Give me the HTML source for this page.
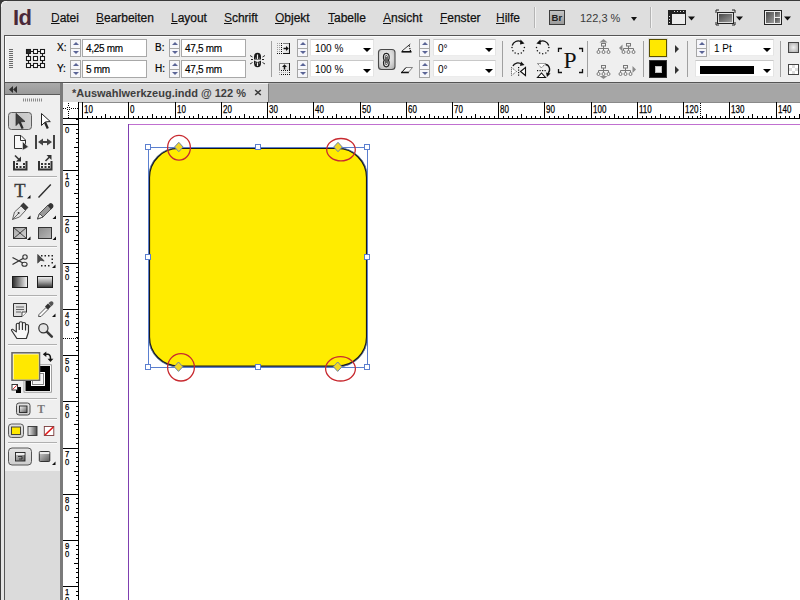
<!DOCTYPE html>
<html><head><meta charset="utf-8">
<style>
*{box-sizing:border-box;margin:0;padding:0}
html,body{width:800px;height:600px;overflow:hidden;background:#dedede;font-family:"Liberation Sans",sans-serif;position:relative}
.a{position:absolute}
.menu{position:absolute;top:11px;font-size:12px;letter-spacing:-0.02px;color:#111;-webkit-text-stroke:0.25px #111;white-space:nowrap}
.menu u{text-decoration:underline;text-underline-offset:0.5px;text-decoration-thickness:1px;-webkit-text-stroke:0}
.lbl{position:absolute;font-size:10px;color:#000;-webkit-text-stroke:0.2px #000}
.spin{position:absolute;width:11px;height:18px;border:1px solid #a6a6a6;background:linear-gradient(#f6f6fa 0 8px,#a6a6a6 8px 9px,#f6f6fa 9px)}
.spin:before{content:"";position:absolute;left:1.5px;top:2px;border-left:3px solid transparent;border-right:3px solid transparent;border-bottom:3.5px solid #5a6496}
.spin:after{content:"";position:absolute;left:1.5px;top:11px;border-left:3px solid transparent;border-right:3px solid transparent;border-top:3.5px solid #5a6496}
.inp{position:absolute;height:18px;background:#fff;border:1px solid #a8a8a8;font-size:10px;letter-spacing:-0.3px;color:#000;-webkit-text-stroke:0.15px #000;padding:3px 0 0 3px;white-space:nowrap}
.cmb{position:absolute;height:17px;background:#fff;border-top:1px solid #c8c8c8;border-left:1px solid #e4e4e4;border-right:1px solid #e4e4e4;border-bottom:1px solid #ececec;font-size:10px;color:#000;padding:3px 0 0 4px;white-space:nowrap}
.cmb:after{content:"";position:absolute;right:2px;top:8px;width:8px;height:4px;background:#000;clip-path:polygon(0 0,100% 0,50% 100%)}
.sep{position:absolute;width:1px;background:#a0a0a0}
.rl{position:absolute;top:105px;line-height:10px;font-size:10px;transform:scaleX(0.8);transform-origin:0 0}
.rv{position:absolute;left:65px;line-height:10px;font-size:9px;transform:scaleX(0.85);transform-origin:0 0}
</style></head><body>
<!-- window frame -->
<div class="a" style="left:0;top:0;width:800px;height:1px;background:#3a3a3a"></div>
<div class="a" style="left:0;top:0;width:1px;height:600px;background:#3a3a3a"></div>
<div class="a" style="left:1px;top:1px;width:6px;height:6px;border-top-left-radius:5px;border-top:1px solid #f4f4f4;border-left:1px solid #f4f4f4;box-shadow:-2px -2px 0 1px #3a3a3a"></div>
<!-- logo -->
<div class="a" style="left:13px;top:5px;font:bold 22px 'Liberation Sans';color:#4a2838;letter-spacing:-0.5px">Id</div>
<div class="menu" style="left:51px"><u>D</u>atei</div>
<div class="menu" style="left:96px"><u>B</u>earbeiten</div>
<div class="menu" style="left:171px"><u>L</u>ayout</div>
<div class="menu" style="left:224px"><u>S</u>chrift</div>
<div class="menu" style="left:275px"><u>O</u>bjekt</div>
<div class="menu" style="left:328px"><u>T</u>abelle</div>
<div class="menu" style="left:383px"><u>A</u>nsicht</div>
<div class="menu" style="left:440px"><u>F</u>enster</div>
<div class="menu" style="left:496px"><u>H</u>ilfe</div>

<!-- control bar -->
<div class="a" style="left:1px;top:30px;width:3px;height:570px;background:#e4e4e4"></div>
<div class="a" style="left:4px;top:35px;width:796px;height:48px;background:#efefef;border-top:1px solid #555;border-left:1px solid #555;border-bottom:1px solid #555;box-shadow:inset 1px 1px 0 #fcfcfc"></div>


<!-- menu right -->
<div class="a" style="left:534px;top:7px;width:1px;height:21px;background:#b4b4b4;box-shadow:1px 0 0 #f2f2f2"></div>
<div class="a" style="left:549px;top:10px;width:16px;height:15px;background:linear-gradient(#c4c4c4,#9a9a9a);border:1px solid #3c3c3c;font:bold 9.5px 'Liberation Sans';color:#1e1e1e;text-align:center;line-height:14px;letter-spacing:0.3px">Br</div>
<div class="a" style="left:580px;top:12px;font-size:11px;color:#3a3a3a;white-space:nowrap">122,3 %</div>
<div class="a" style="left:631px;top:17px;border-left:3.5px solid transparent;border-right:3.5px solid transparent;border-top:4px solid #111"></div>
<div class="a" style="left:650px;top:7px;width:1px;height:21px;background:#b4b4b4;box-shadow:1px 0 0 #f2f2f2"></div>
<svg class="a" style="left:660px;top:6px" width="140" height="24">
  <!-- view extras -->
  <rect x="8.5" y="4.5" width="17" height="14" fill="#ececec" stroke="#222"/>
  <rect x="8" y="4" width="18" height="4" fill="#222"/>
  <rect x="8" y="4" width="4" height="15" fill="#222"/>
  <g fill="#ddd"><rect x="14" y="5" width="1" height="1"/><rect x="17" y="5" width="1" height="1"/><rect x="20" y="5" width="1" height="1"/><rect x="23" y="5" width="1" height="1"/><rect x="9" y="10" width="1" height="1"/><rect x="9" y="13" width="1" height="1"/><rect x="9" y="16" width="1" height="1"/></g>
  <path d="M28 10.5h7l-3.5 4z" fill="#111"/>
  <!-- screen mode -->
  <path d="M56 7v-3h3M72 4h3v3M75 16v3h-3M59 19h-3v-3" fill="none" stroke="#222" stroke-width="1"/>
  <rect x="57.5" y="6.5" width="16" height="11" fill="none" stroke="#222"/>
  <rect x="59" y="8" width="13" height="8" fill="url(#gsm)"/>
  <path d="M76 10.5h7l-3.5 4z" fill="#111"/>
  <!-- arrange -->
  <rect x="104.5" y="4.5" width="17" height="14" fill="#eee" stroke="#222"/>
  <rect x="106" y="6" width="8" height="11" fill="url(#gsm)"/>
  <rect x="115" y="6" width="5" height="5" fill="url(#gsm)"/>
  <rect x="115" y="12" width="5" height="5" fill="url(#gsm)"/>
  <path d="M124 10.5h7l-3.5 4z" fill="#111"/>
  <defs><linearGradient id="gsm" x1="0" y1="0" x2="1" y2="1"><stop offset="0" stop-color="#4a4a4a"/><stop offset="1" stop-color="#9a9a9a"/></linearGradient></defs>
</svg>

<!-- control bar content -->
<div class="a" style="left:9px;top:49px;width:4px;height:19px;background:repeating-linear-gradient(#6a6a6a 0 1px,transparent 1px 2px)"></div>
<svg class="a" style="left:20px;top:44px" width="30" height="30">
  <g stroke="#1a1a1a" stroke-width="1.1" fill="#fff">
    <path d="M11 7.5h2M18 7.5h2M11 21.5h2M18 21.5h2M8.5 10v2M8.5 17v2M22.5 10v2M22.5 17v2" fill="none"/>
    <rect x="6.5" y="5.5" width="4" height="4" fill="#2a2a2a"/>
    <rect x="13.5" y="5.5" width="4" height="4"/><rect x="20.5" y="5.5" width="4" height="4"/>
    <rect x="6.5" y="12.5" width="4" height="4"/><rect x="13.5" y="12.5" width="4" height="4"/><rect x="20.5" y="12.5" width="4" height="4"/>
    <rect x="6.5" y="19.5" width="4" height="4"/><rect x="13.5" y="19.5" width="4" height="4"/><rect x="20.5" y="19.5" width="4" height="4"/>
  </g>
</svg>
<div class="lbl" style="left:57px;top:42px">X:</div>
<div class="lbl" style="left:57px;top:63px">Y:</div>
<div class="spin" style="left:70px;top:39px"></div>
<div class="spin" style="left:70px;top:60px"></div>
<div class="inp" style="left:82px;top:39px;width:65px">4,25 mm</div>
<div class="inp" style="left:82px;top:60px;width:65px">5 mm</div>
<div class="lbl" style="left:155px;top:42px">B:</div>
<div class="lbl" style="left:155px;top:63px">H:</div>
<div class="spin" style="left:169px;top:39px"></div>
<div class="spin" style="left:169px;top:60px"></div>
<div class="inp" style="left:181px;top:39px;width:65px">47,5 mm</div>
<div class="inp" style="left:181px;top:60px;width:65px">47,5 mm</div>
<svg class="a" style="left:246px;top:48px" width="24" height="24">
  <path d="M8 11.5V8.5Q8 5 11.5 4.8Q15 5 15 8.5V11.5z" fill="#1a1a1a"/>
  <path d="M8 12.5V15.5Q8 19 11.5 19.2Q15 19 15 15.5V12.5Q13 13.5 11.5 14Q10 13.5 8 12.5z" fill="#1a1a1a"/>
  <path d="M11.5 6.5v4.5M11.5 14.5v3.5" stroke="#eee" stroke-width="1.2"/>
  <path d="M9.6 9.5v2M13.4 9.5v2M9.6 14v2M13.4 14v2" stroke="#777" stroke-width="0.8"/>
  <g stroke="#222" stroke-width="1.2" fill="none"><path d="M5 11.5h2M16 11.5h2"/></g>
  <g stroke="#333" stroke-width="1" fill="none"><path d="M4 7.5l2.5 1.5M19 7.5l-2.5 1.5M4 16l2.5-1.5M19 16l-2.5-1.5"/></g>
</svg>
<div class="sep" style="left:271px;top:41px;height:36px"></div>
<svg class="a" style="left:0;top:0" width="300" height="82">
  <defs><linearGradient id="gsc" x1="0" y1="0" x2="1" y2="1"><stop offset="0" stop-color="#fafafa"/><stop offset="1" stop-color="#d4d4d4"/></linearGradient></defs>
  <rect x="283" y="43" width="7" height="11" fill="url(#gsc)"/>
  <g shape-rendering="crispEdges">
  <rect x="283" y="43" width="7" height="1" fill="#808080"/>
  <rect x="289" y="43" width="1.4" height="11" fill="#111"/>
  <rect x="283" y="53" width="7" height="1.4" fill="#111"/>
  <rect x="279" y="63" width="11" height="7" fill="url(#gsc)"/>
  <rect x="279" y="63" width="11" height="1" fill="#808080"/>
  <rect x="279" y="63" width="1" height="7" fill="#909090"/>
  <rect x="289" y="63" width="1.4" height="7" fill="#111"/>
  <rect x="277" y="43" width="1" height="1" fill="#a0a0a0"/><rect x="277" y="45" width="1" height="1" fill="#a0a0a0"/><rect x="277" y="47" width="1" height="1" fill="#a0a0a0"/><rect x="277" y="49" width="1" height="1" fill="#a0a0a0"/><rect x="277" y="51" width="1" height="1" fill="#a0a0a0"/><rect x="277" y="53" width="1" height="1" fill="#111"/><rect x="279" y="43" width="1" height="1" fill="#a0a0a0"/><rect x="279" y="45" width="1" height="1" fill="#a0a0a0"/><rect x="279" y="47" width="1" height="1" fill="#a0a0a0"/><rect x="279" y="49" width="1" height="1" fill="#a0a0a0"/><rect x="279" y="51" width="1" height="1" fill="#a0a0a0"/><rect x="279" y="53" width="1" height="1" fill="#111"/><rect x="281" y="43" width="1" height="1" fill="#111"/><rect x="281" y="45" width="1" height="1" fill="#111"/><rect x="281" y="47" width="1" height="1" fill="#111"/><rect x="281" y="49" width="1" height="1" fill="#111"/><rect x="281" y="51" width="1" height="1" fill="#111"/><rect x="281" y="53" width="1" height="1" fill="#111"/><rect x="279" y="70" width="1" height="1" fill="#a0a0a0"/><rect x="279" y="72" width="1" height="1" fill="#a0a0a0"/><rect x="279" y="74" width="1" height="1" fill="#a0a0a0"/><rect x="281" y="70" width="1" height="1" fill="#111"/><rect x="281" y="72" width="1" height="1" fill="#b0b0b0"/><rect x="281" y="74" width="1" height="1" fill="#111"/><rect x="283" y="70" width="1" height="1" fill="#111"/><rect x="283" y="72" width="1" height="1" fill="#b0b0b0"/><rect x="283" y="74" width="1" height="1" fill="#111"/><rect x="285" y="70" width="1" height="1" fill="#111"/><rect x="285" y="72" width="1" height="1" fill="#b0b0b0"/><rect x="285" y="74" width="1" height="1" fill="#111"/><rect x="287" y="70" width="1" height="1" fill="#111"/><rect x="287" y="72" width="1" height="1" fill="#b0b0b0"/><rect x="287" y="74" width="1" height="1" fill="#111"/><rect x="289" y="70" width="1" height="1" fill="#111"/><rect x="289" y="72" width="1" height="1" fill="#111"/><rect x="289" y="74" width="1" height="1" fill="#111"/>
  </g>
  <path d="M283.5 48.5H286.5" stroke="#111" stroke-width="1.5"/><path d="M286 46L288.8 48.5L286 51Z" fill="#111"/>
  <path d="M284.5 69.5V66.5" stroke="#111" stroke-width="1.5"/><path d="M282 67L284.5 64.2L287 67Z" fill="#111"/>
</svg>
<div class="spin" style="left:297px;top:39px"></div>
<div class="spin" style="left:297px;top:60px"></div>
<div class="cmb" style="left:310px;top:39px;width:64px">100 %</div>
<div class="cmb" style="left:310px;top:60px;width:64px">100 %</div>
<svg class="a" style="left:0;top:0" width="420" height="82">
  <defs><radialGradient id="glk" cx="0.45" cy="0.4" r="0.7"><stop offset="0" stop-color="#f4f4f4"/><stop offset="0.6" stop-color="#d8d8d8"/><stop offset="1" stop-color="#b4b4b4"/></radialGradient></defs>
  <rect x="378.5" y="49.5" width="16.5" height="20" rx="3" fill="url(#glk)" stroke="#4a4a4a" stroke-width="1.1"/>
  <path d="M386.3 53.3C383.5 53.3 383.3 56 383.5 58.5C383.7 59.8 384.3 60 384.3 60.2C384.3 60.4 383.5 61 383.5 62.5C383.5 65.5 384.5 66.8 386.3 66.8C388.1 66.8 389.1 65.5 389.1 62.5C389.1 61 388.3 60.4 388.3 60.2C388.3 60 388.9 59.8 389.1 58.5C389.3 56 389.1 53.3 386.3 53.3Z" fill="#e8e8e8" stroke="#222" stroke-width="1.2"/>
  <rect x="385.3" y="55.5" width="2" height="9" rx="1" fill="#fff" stroke="#333" stroke-width="0.9"/>
  <path d="M386.3 57v6" stroke="#222" stroke-width="0.8"/>
  <!-- rotation angle -->
  <path d="M402 51L410.3 44" stroke="#222" stroke-width="0.9"/>
  <g fill="#111"><rect x="408.8" y="45.5" width="1.2" height="1.2"/><rect x="409.3" y="48" width="1.2" height="1.2"/><rect x="409.8" y="50" width="1.2" height="1"/></g>
  <rect x="401.5" y="51" width="10" height="1.6" fill="#111"/>
  <!-- shear -->
  <path d="M401.8 72.3L406 67.5H412.5L408.5 72.3Z" fill="#f6f6f6" stroke="#666" stroke-width="0.8"/>
  <path d="M401 72.5H408.8" stroke="#111" stroke-width="1.5"/>
  <path d="M401.8 72.3L406 67.5" stroke="#222" stroke-width="1"/>
</svg>
<div class="spin" style="left:419px;top:39px"></div>
<div class="spin" style="left:419px;top:60px"></div>
<div class="cmb" style="left:433px;top:39px;width:63px">0°</div>
<div class="cmb" style="left:433px;top:60px;width:63px">0°</div>
<div class="sep" style="left:502px;top:41px;height:36px"></div>
<svg class="a" style="left:0;top:0" width="560" height="82">
  <g fill="#111">
    <circle cx="512" cy="47.5" r="0.75"/><circle cx="512.9" cy="50.8" r="0.75"/><circle cx="515.1" cy="53" r="0.75"/><circle cx="518.2" cy="53.8" r="0.75"/><circle cx="521.3" cy="53" r="0.75"/><circle cx="523.5" cy="50.8" r="0.75"/><circle cx="524.4" cy="47.5" r="0.75"/>
    <circle cx="536.5" cy="47.5" r="0.75"/><circle cx="537.4" cy="50.8" r="0.75"/><circle cx="539.6" cy="53" r="0.75"/><circle cx="542.7" cy="53.8" r="0.75"/><circle cx="545.8" cy="53" r="0.75"/><circle cx="548" cy="50.8" r="0.75"/><circle cx="548.9" cy="47.5" r="0.75"/>
  </g>
  <path d="M512.2 45.5A6.3 6.3 0 0 1 521 41.6" fill="none" stroke="#111" stroke-width="1.3"/>
  <path d="M520.5 39.5L524.5 43.5L520 44.5Z" fill="#111"/>
  <path d="M548.7 45.5A6.3 6.3 0 0 0 539.9 41.6" fill="none" stroke="#111" stroke-width="1.3"/>
  <path d="M540.4 39.5L536.4 43.5L540.9 44.5Z" fill="#111"/>
  <!-- flip h -->
  <g fill="#111"><rect x="518" y="67" width="1.2" height="1.2"/><rect x="518" y="69.5" width="1.2" height="1.2"/><rect x="518" y="72" width="1.2" height="1.2"/><rect x="518" y="74.5" width="1.2" height="1.2"/></g>
  <path d="M511.5 67.5L516.5 71.5L511.5 75.5Z" fill="#fff" stroke="#333" stroke-width="0.9" stroke-dasharray="1 1"/>
  <path d="M525.5 67.5L520.5 71.5L525.5 75.5Z" fill="#fff" stroke="#111" stroke-width="1.1"/>
  <path d="M513 66A5 4.2 0 0 1 521.5 64.3" fill="none" stroke="#111" stroke-width="1.3"/>
  <path d="M521 61.5L524.5 65L520 66Z" fill="#111"/>
  <!-- flip v -->
  <g fill="#111"><rect x="537" y="70" width="1.2" height="1.2"/><rect x="539.5" y="70" width="1.2" height="1.2"/><rect x="542" y="70" width="1.2" height="1.2"/><rect x="544.5" y="70" width="1.2" height="1.2"/></g>
  <path d="M537.5 63.5H545.5L541.5 68Z" fill="#fff" stroke="#333" stroke-width="0.9" stroke-dasharray="1 1"/>
  <path d="M537.5 77.5H545.5L541.5 73Z" fill="#fff" stroke="#111" stroke-width="1.1"/>
  <path d="M545.5 64.5A4.5 5 0 0 1 548.3 73" fill="none" stroke="#111" stroke-width="1.3"/>
  <path d="M546 72.5L550.5 73.5L547 77Z" fill="#111"/>
</svg>
<svg class="a" style="left:557px;top:47px" width="27" height="27">
  <path d="M1.5 5V1.5H5M22 1.5h3.5V5M25.5 22v3.5H22M5 25.5H1.5V22" fill="none" stroke="#111" stroke-width="1.3"/>
  <text x="13" y="20.5" font-family="Liberation Serif" font-size="23.5" text-anchor="middle" fill="#111">P</text>
</svg>
<div class="sep" style="left:587px;top:41px;height:36px"></div>
<svg class="a" style="left:594px;top:39px" width="46" height="40">
  <g fill="#f4f4f4" stroke="#777" stroke-width="1">
    <path d="M9.5 6v3M4.5 11.5v-2h10v2M9.5 9.5v2" fill="none"/>
    <rect x="7.5" y="4.5" width="4" height="2.5"/>
    <circle cx="4.5" cy="13" r="1.5"/><circle cx="9.5" cy="13" r="1.5"/><circle cx="14.5" cy="13" r="1.5"/>
    <path d="M34.5 7v2M29.5 11.5v-2h10v2M34.5 9.5v2" fill="none"/>
    <rect x="32.5" y="4.5" width="4" height="2.5"/>
    <circle cx="29.5" cy="13" r="1.5"/><circle cx="34.5" cy="13" r="1.5"/><circle cx="39.5" cy="13" r="1.5"/>
    <path d="M9.5 28v3M4.5 33.5v-2h10v2M9.5 31.5v2" fill="none"/>
    <rect x="7.5" y="26.5" width="4" height="2.5"/>
    <circle cx="4.5" cy="35" r="1.5"/><circle cx="9.5" cy="35" r="1.5"/><circle cx="14.5" cy="35" r="1.5"/>
    <path d="M31.5 29v2M26.5 33.5v-2h10v2M31.5 31.5v2" fill="none"/>
    <rect x="29.5" y="26.5" width="4" height="2.5"/>
    <circle cx="26.5" cy="35" r="1.5"/><circle cx="31.5" cy="35" r="1.5"/><circle cx="36.5" cy="35" r="1.5"/>
  </g>
  <g fill="#8a8a8a"><path d="M5.5 3.5h8l-4-3.5z"/><path d="M5.5 37h8l-4 3z"/><path d="M28.5 5.5v7l-3.5-3.5z"/><path d="M38.5 27v7l3.5-3.5z"/></g>
</svg>
<div class="sep" style="left:643px;top:41px;height:36px"></div>
<div class="a" style="left:649px;top:39px;width:18px;height:18px;background:#ffe800;border:1.5px solid #5a5000;box-shadow:0 0 0 1px #ddd"></div>
<div class="a" style="left:649px;top:60px;width:18px;height:18px;background:#000;border:1px solid #333"></div>
<div class="a" style="left:655px;top:66px;width:7px;height:7px;background:#f2f2f2;border:1px solid #bbb"></div>
<div class="a" style="left:675px;top:45px;border-top:4px solid transparent;border-bottom:4px solid transparent;border-left:4px solid #333"></div>
<div class="a" style="left:675px;top:66px;border-top:4px solid transparent;border-bottom:4px solid transparent;border-left:4px solid #333"></div>
<div class="sep" style="left:687px;top:41px;height:36px"></div>
<div class="spin" style="left:696px;top:39px"></div>
<div class="cmb" style="left:709px;top:39px;width:65px">1 Pt</div>
<div class="cmb" style="left:695px;top:60px;width:79px"><div style="position:absolute;left:4px;top:5px;width:54px;height:8px;background:#000"></div></div>
<div class="sep" style="left:780px;top:41px;height:36px"></div>
<div class="a" style="left:788px;top:42px;width:11px;height:11px;border:1px solid #444;background:radial-gradient(#f0f0f0,#aaa)"></div>
<div class="a" style="left:788px;top:64px;width:11px;height:11px;border:1px solid #444;background:conic-gradient(#ddd 25%,#fff 0 50%,#ddd 0 75%,#fff 0);background-size:6px 6px"></div>

<!-- tab bar -->
<div class="a" style="left:60px;top:83px;width:740px;height:19px;background:#a6a6a6;border-top:1px solid #b4b4b4"></div>
<div class="a" style="left:63px;top:83px;width:206px;height:19px;background:#d8d8d8;border-top:1px solid #f2f2f2;border-right:1px solid #7a7a7a"></div>
<div class="a" style="left:72px;top:87px;font:bold 11px 'Liberation Sans';color:#3e3e3e;white-space:nowrap">*Auswahlwerkzeug.indd @ 122 %</div>
<svg class="a" style="left:254px;top:89px" width="8" height="7"><path d="M1.2 1L6.8 6M6.8 1L1.2 6" stroke="#3a3a3a" stroke-width="1.6"/></svg>
<!-- tools panel -->
<div class="a" style="left:4px;top:83px;width:1px;height:517px;background:#555"></div>
<div class="a" style="left:5px;top:83px;width:55px;height:12px;background:linear-gradient(#aaa,#999);border-bottom:1px solid #5a5a5a"></div>
<div class="a" style="left:5px;top:95px;width:55px;height:376px;background:#efefef"></div>
<div class="a" style="left:5px;top:471px;width:55px;height:129px;background:#dbdbdb"></div>
<div class="a" style="left:60px;top:83px;width:3px;height:517px;background:#7a7a7a"></div>
<svg class="a" style="left:5px;top:83px" width="20" height="12"><path d="M4 6.5L8 3V10Z M8 6.5L12 3V10Z" fill="#2e2e2e"/></svg>
<!--TOOLS-->
<svg class="a" style="left:0;top:0" width="64" height="480">
<defs>
  <linearGradient id="btn" x1="0" y1="0" x2="1" y2="0"><stop offset="0" stop-color="#d4d4d4"/><stop offset="0.5" stop-color="#c8c8c8"/><stop offset="1" stop-color="#d0d0d0"/></linearGradient>
  <linearGradient id="gh" x1="0" y1="0" x2="1" y2="0"><stop offset="0" stop-color="#2a2a2a"/><stop offset="1" stop-color="#fafafa"/></linearGradient>
  <linearGradient id="gv" x1="0" y1="0" x2="0" y2="1"><stop offset="0" stop-color="#f4f4f4"/><stop offset="0.5" stop-color="#a0a0a0"/><stop offset="1" stop-color="#333"/></linearGradient>
  <linearGradient id="gr" x1="0" y1="0" x2="1" y2="1"><stop offset="0" stop-color="#8a8a8a"/><stop offset="1" stop-color="#b8b8b8"/></linearGradient>
  <linearGradient id="gf" x1="0" y1="0" x2="1" y2="1"><stop offset="0" stop-color="#a8a8a8"/><stop offset="1" stop-color="#d4d4d4"/></linearGradient>
  <linearGradient id="gb2" x1="0" y1="0" x2="0" y2="1"><stop offset="0" stop-color="#e8e8e8"/><stop offset="1" stop-color="#c4c4c4"/></linearGradient>
  <linearGradient id="gsq" x1="0" y1="0" x2="1" y2="1"><stop offset="0" stop-color="#f8f8f8"/><stop offset="1" stop-color="#707070"/></linearGradient>
</defs>
<!-- grip -->
<g fill="#8a8a8a"><rect x="23" y="98.5" width="1" height="3"/><rect x="25" y="98.5" width="1" height="3"/><rect x="27" y="98.5" width="1" height="3"/><rect x="29" y="98.5" width="1" height="3"/><rect x="31" y="98.5" width="1" height="3"/><rect x="33" y="98.5" width="1" height="3"/><rect x="35" y="98.5" width="1" height="3"/><rect x="37" y="98.5" width="1" height="3"/><rect x="39" y="98.5" width="1" height="3"/><rect x="41" y="98.5" width="1" height="3"/></g>
<!-- selected button -->
<rect x="8.5" y="112.5" width="23" height="17" rx="3" fill="url(#btn)" stroke="#5e5e5e"/>
<!-- selection arrow -->
<path d="M16 113.3V125.6L19.2 122.4L20.8 121.8L25 121.5Z" fill="#3e3e3e" stroke="#2a2a2a" stroke-width="0.7" stroke-linejoin="round"/>
<path d="M19.7 122L22.6 128.6" stroke="#2a2a2a" stroke-width="2.3"/>
<!-- direct selection -->
<path d="M41.5 113.5V125.5L44.6 122.5L46.2 121.8L50.3 121.6Z" fill="#fff" stroke="#222" stroke-width="1" stroke-linejoin="round"/>
<path d="M45 122.3L47.8 128.5" stroke="#2a2a2a" stroke-width="2.3"/>
<!-- page tool -->
<path d="M14.5 135.5H21L25.5 140V148.5H14.5Z" fill="#fafafa" stroke="#333"/>
<path d="M20.5 135.5V140.5H25.5" fill="none" stroke="#333"/>
<path d="M22.5 141.5V150.3L28.5 147Z" fill="#333" stroke="#efefef" stroke-width="0.6"/>
<!-- gap tool -->
<rect x="35" y="135" width="2" height="14" fill="#444"/><rect x="53" y="135" width="2" height="14" fill="#444"/>
<path d="M38 142L43 138.5V141H47V138.5L52 142L47 145.5V143H43V145.5Z" fill="#444"/>
<!-- content collector -->
<path d="M14 161V169.5H26.5V161" fill="none" stroke="#333" stroke-width="2"/>
<g fill="#333"><rect x="16" y="163" width="2" height="2"/><rect x="23" y="163" width="2" height="2"/><rect x="16" y="166" width="2" height="2"/><rect x="19.5" y="166" width="2" height="2"/><rect x="23" y="166" width="2" height="2"/></g>
<path d="M15 155.5L19 159.5" stroke="#333" stroke-width="1.6"/><path d="M21 161.5V156.5L16 161.5Z" fill="#333"/>
<!-- content placer -->
<path d="M39 161V169.5H51.5V161" fill="none" stroke="#333" stroke-width="2"/>
<g fill="#333"><rect x="41" y="163" width="2" height="2"/><rect x="44.5" y="163" width="2" height="2"/><rect x="48" y="163" width="2" height="2"/><rect x="41" y="166" width="2" height="2"/><rect x="44.5" y="166" width="2" height="2"/><rect x="48" y="166" width="2" height="2"/></g>
<path d="M45.5 161L49.5 157" stroke="#333" stroke-width="1.6"/><path d="M51.5 155V160L46.5 155Z" fill="#333"/>
<!-- separators -->
<g fill="#b0b0b0"><rect x="8" y="176" width="49" height="1"/><rect x="8" y="246" width="49" height="1"/><rect x="8" y="295" width="49" height="1"/><rect x="8" y="344" width="49" height="1"/><rect x="8" y="398" width="49" height="1"/><rect x="8" y="418" width="49" height="1"/><rect x="8" y="442" width="49" height="1"/></g>
<g fill="#fafafa"><rect x="8" y="177" width="49" height="1"/><rect x="8" y="247" width="49" height="1"/><rect x="8" y="296" width="49" height="1"/><rect x="8" y="345" width="49" height="1"/><rect x="8" y="399" width="49" height="1"/><rect x="8" y="419" width="49" height="1"/><rect x="8" y="443" width="49" height="1"/></g>
<!-- type -->
<text x="20" y="197" font-family="Liberation Serif" font-size="18.5" text-anchor="middle" fill="#3a3a3a" stroke="#3a3a3a" stroke-width="0.35">T</text>
<g fill="#111"><path d="M27 198.5H30.5V195Z"/><path d="M27 219H30.5V215.5Z"/><path d="M52.5 219H56V215.5Z"/><path d="M27 240H30.5V236.5Z"/><path d="M52.5 240H56V236.5Z"/><path d="M52 268H55.5V264.5Z"/><path d="M52 317H55.5V313.5Z"/></g>
<!-- line -->
<path d="M38.5 197.5L50.8 184.5" stroke="#2e2e2e" stroke-width="1.4"/>
<!-- pen -->
<path d="M12.5 219.5L14.5 212L21 206L25.5 210.5L19.5 217Z" fill="#e6e6e6" stroke="#555" stroke-width="0.9" stroke-linejoin="round"/>
<path d="M12.5 219.5L18 214" stroke="#555" stroke-width="0.9"/>
<circle cx="18.6" cy="213" r="1" fill="#333"/>
<path d="M20.5 205.5L23.5 202.5L28.5 207.5L25.5 210.5Z" fill="#3a3a3a"/>
<!-- pencil -->
<path d="M37.5 219L39.5 213.5L48 205L51.5 208.5L43 217Z" fill="#999" stroke="#444" stroke-width="0.9" stroke-linejoin="round"/>
<path d="M37.5 219L39.5 213.5L43 217Z" fill="#f2f2f2" stroke="#444" stroke-width="0.9" stroke-linejoin="round"/>
<path d="M47.5 205.5L49.5 203.5Q51 202.5 52.5 204L53 204.5Q54 206 53 207.5L51 209.5Z" fill="#333"/>
<!-- rect frame -->
<rect x="13.5" y="227.5" width="13" height="11" fill="url(#gf)" stroke="#333"/>
<path d="M13.5 227.5L26.5 238.5M26.5 227.5L13.5 238.5" stroke="#333" stroke-width="0.9"/>
<!-- rect -->
<rect x="38.5" y="227.5" width="13" height="11" fill="url(#gr)" stroke="#333"/>
<!-- scissors -->
<circle cx="25" cy="257" r="2.2" fill="none" stroke="#333" stroke-width="1.1"/>
<ellipse cx="24.5" cy="264.3" rx="2.6" ry="2" fill="none" stroke="#333" stroke-width="1.1"/>
<path d="M12.5 257.5L23 263M12.5 264.5L23 258.5" stroke="#333" stroke-width="1.3"/>
<!-- free transform -->
<path d="M37.5 254V263.5L40.5 260.5L44 261.5L44.5 261Z" fill="#555"/>
<path d="M37.5 254L44.5 260.8L40.6 260.6L37.5 263.5Z" fill="#4a4a4a"/>
<g fill="#222"><rect x="41" y="255" width="1.5" height="1.5"/><rect x="44.5" y="255" width="1.5" height="1.5"/><rect x="48" y="255" width="1.5" height="1.5"/><rect x="51.5" y="255" width="1.5" height="1.5"/><rect x="51.5" y="258.5" width="1.5" height="1.5"/><rect x="51.5" y="262" width="1.5" height="1.5"/><rect x="41" y="265" width="1.5" height="1.5"/><rect x="44.5" y="265" width="1.5" height="1.5"/><rect x="48" y="265" width="1.5" height="1.5"/></g>
<!-- gradient swatch -->
<rect x="12.5" y="276.5" width="15" height="11" fill="url(#gh)" stroke="#1e1e1e"/>
<rect x="37.5" y="276.5" width="15" height="11" fill="url(#gv)" stroke="#1e1e1e"/>
<!-- note -->
<path d="M13.5 303.5H26.5V312L22 316.5H13.5Z" fill="#e0e0e0" stroke="#333"/>
<path d="M22 316.5V312H26.5" fill="#fff" stroke="#333" stroke-width="0.9"/>
<path d="M16 307h8M16 309.5h8M16 312h5" stroke="#555" stroke-width="0.9"/>
<!-- eyedropper -->
<path d="M38.5 316.5L39 314.5L46 307.5L48 309.5L41 316.5Z" fill="#fafafa" stroke="#444" stroke-width="0.9" stroke-linejoin="round"/>
<path d="M45 306.5L48 303.5L51 306.5L48 309.5Z" fill="#333"/>
<path d="M48.5 303L50.5 301.5Q52 300.8 53 302L53.3 302.5Q53.8 303.8 52.8 305L51 306.5Z" fill="#555"/>
<!-- hand -->
<g transform="translate(11 0) scale(1.18 1) translate(-11 0)"><path d="M16 338.5L11.5 330.5Q11 329 12.5 329.3L15.5 332V324.5Q15.5 323.2 16.8 323.2Q18 323.2 18 324.5V329.5V322.8Q18 321.7 19.4 321.7Q20.7 321.7 20.7 322.8V329.5V323.5Q20.7 322.4 22 322.4Q23.3 322.4 23.3 323.5V330V325.5Q23.3 324.5 24.5 324.5Q25.8 324.5 25.8 325.5V332L24 338.5Z" fill="#f8f8f8" stroke="#333" stroke-width="1" stroke-linejoin="round"/>
</g>
<!-- zoom -->
<circle cx="43.4" cy="328.2" r="4.6" fill="#e4e4e4" stroke="#333" stroke-width="1.2"/>
<path d="M47 331.8L51.8 336.6" stroke="#3a3a3a" stroke-width="2.6" stroke-linecap="round"/>
</svg>

<svg class="a" style="left:0;top:340px" width="64" height="140">
<defs>
  <linearGradient id="gbt" x1="0" y1="0" x2="0" y2="1"><stop offset="0" stop-color="#e4e4e4"/><stop offset="1" stop-color="#cdcdcd"/></linearGradient>
  <linearGradient id="gsq2" x1="0" y1="0" x2="1" y2="1"><stop offset="0" stop-color="#fafafa"/><stop offset="1" stop-color="#5a5a5a"/></linearGradient>
  <linearGradient id="ggr" x1="0" y1="0" x2="1" y2="0"><stop offset="0" stop-color="#f4f4f4"/><stop offset="1" stop-color="#4a4a4a"/></linearGradient>
  <linearGradient id="gpv" x1="0" y1="0" x2="1" y2="1"><stop offset="0" stop-color="#d0d0d0"/><stop offset="1" stop-color="#5c5c5c"/></linearGradient>
</defs>
<!-- stroke swatch (behind) -->
<rect x="24" y="24.8" width="27.5" height="27.4" fill="#fff" stroke="#8a8a8a" stroke-width="0.8"/>
<rect x="25.5" y="26" width="24.5" height="25" fill="#000"/>
<rect x="31" y="32" width="14" height="14" fill="#fff"/>
<rect x="32.5" y="33.5" width="11" height="11" fill="none" stroke="#777" stroke-width="0.9"/>
<rect x="33.5" y="34.5" width="9" height="9" fill="#f4f4f4"/>
<!-- fill swatch -->
<rect x="12" y="12.8" width="27.5" height="27.4" fill="#fff" stroke="#6a6a6a" stroke-width="1.6"/>
<rect x="13.6" y="14.4" width="25" height="25" fill="#ffe800"/>
<!-- swap arrows -->
<path d="M45.5 14.3H48Q50.5 14.6 50.5 18.5V19.5" fill="none" stroke="#151515" stroke-width="1.5"/>
<path d="M42.8 14.3L46.3 11.5V17.1Z" fill="#151515"/>
<path d="M47.6 18.8H53.4L50.5 22Z" fill="#151515"/>
<!-- default mini -->
<rect x="16" y="47" width="5" height="6" fill="#000"/>
<rect x="12" y="44.5" width="5.5" height="5.5" fill="#fff" stroke="#222" stroke-width="0.9"/>
<path d="M12.8 49.3L16.8 45.3" stroke="#d62020" stroke-width="1"/>
<!-- container / text buttons -->
<rect x="16.5" y="63" width="13.5" height="12" rx="2.5" fill="url(#gbt)" stroke="#4a4a4a"/>
<rect x="19.5" y="66" width="7.5" height="6.5" fill="url(#gsq2)" stroke="#222" stroke-width="0.9"/>
<text x="41" y="73" font-family="Liberation Serif" font-weight="bold" font-size="11.5" text-anchor="middle" fill="#7a7a7a">T</text>
<!-- fill / gradient / none -->
<rect x="8.5" y="84" width="15" height="13.5" rx="3" fill="url(#gbt)" stroke="#5a5a5a"/>
<rect x="11.5" y="87" width="9" height="7.5" fill="#ffe800" stroke="#333" stroke-width="0.9"/>
<rect x="28" y="86.5" width="9" height="9" fill="url(#ggr)" stroke="#333" stroke-width="0.9"/>
<rect x="44.3" y="86.5" width="9.5" height="9" fill="#fff" stroke="#7a3a3a" stroke-width="0.9"/>
<path d="M45 95L53.3 87" stroke="#e01818" stroke-width="1.6"/>
<!-- screen mode buttons -->
<rect x="8.5" y="108" width="23" height="17" rx="3.5" fill="url(#gbt)" stroke="#555"/>
<rect x="15.5" y="112.5" width="9.5" height="8.5" fill="url(#gpv)" stroke="#222" stroke-width="0.9"/>
<rect x="16" y="113" width="8.5" height="2" fill="#eee"/>
<path d="M18 116.5h4v2.5h-3" fill="none" stroke="#222" stroke-width="0.8"/>
<rect x="39.3" y="111.5" width="10.5" height="10" rx="1" fill="url(#gpv)" stroke="#222" stroke-width="0.9"/>
<rect x="39.8" y="112" width="9.5" height="2" fill="#eaeaea"/>
<path d="M52 125H55.5V121.5Z" fill="#111"/>
</svg>

<!--/TOOLS-->

<!-- rulers -->
<div class="a" style="left:63px;top:102px;width:737px;height:16px;background:#fff;border-top:1px solid #8a8a8a"></div>
<div class="a" style="left:63px;top:102px;width:16px;height:498px;background:#fff"></div>
<div class="a" style="left:63px;top:118px;width:737px;height:1px;background:#000"></div>
<div class="a" style="left:78px;top:102px;width:1px;height:498px;background:#000"></div>

<!-- ruler corner crosshair -->
<svg class="a" style="left:63px;top:102px" width="16" height="17" shape-rendering="crispEdges">
  <g fill="#000">
    <rect x="5" y="1" width="1" height="1"/><rect x="5" y="3" width="1" height="1"/><rect x="5" y="9" width="1" height="1"/><rect x="5" y="11" width="1" height="1"/><rect x="5" y="13" width="1" height="1"/><rect x="5" y="15" width="1" height="1"/>
    <rect x="0" y="6" width="1" height="1"/><rect x="2" y="6" width="1" height="1"/><rect x="8" y="6" width="1" height="1"/><rect x="10" y="6" width="1" height="1"/><rect x="12" y="6" width="1" height="1"/><rect x="14" y="6" width="1" height="1"/>
    <rect x="4" y="5" width="1" height="1"/><rect x="6" y="5" width="1" height="1"/><rect x="4" y="7" width="1" height="1"/><rect x="6" y="7" width="1" height="1"/>
  </g>
</svg>
<svg class="a" style="left:0;top:0" width="800" height="600" shape-rendering="crispEdges"><g fill="#000"><rect x="700" y="103" width="1" height="1"/><rect x="700" y="105" width="1" height="1"/><rect x="700" y="107" width="1" height="1"/><rect x="700" y="109" width="1" height="1"/><rect x="700" y="111" width="1" height="1"/><rect x="700" y="113" width="1" height="1"/><rect x="700" y="115" width="1" height="1"/><rect x="700" y="117" width="1" height="1"/><rect x="63" y="338" width="1" height="1"/><rect x="65" y="338" width="1" height="1"/><rect x="67" y="338" width="1" height="1"/><rect x="69" y="338" width="1" height="1"/><rect x="71" y="338" width="1" height="1"/><rect x="73" y="338" width="1" height="1"/><rect x="75" y="338" width="1" height="1"/><rect x="77" y="338" width="1" height="1"/></g></svg>
<!-- canvas -->
<div class="a" style="left:79px;top:119px;width:721px;height:481px;background:#fff"></div>
<svg class="a" style="left:0;top:0" width="800" height="600" shape-rendering="crispEdges">
<g fill="#000">
<rect x="82" y="102" width="1" height="16"/>
<rect x="87" y="116" width="1" height="2"/>
<rect x="92" y="116" width="1" height="2"/>
<rect x="96" y="116" width="1" height="2"/>
<rect x="101" y="116" width="1" height="2"/>
<rect x="105" y="114" width="1" height="4"/>
<rect x="110" y="116" width="1" height="2"/>
<rect x="115" y="116" width="1" height="2"/>
<rect x="119" y="116" width="1" height="2"/>
<rect x="124" y="116" width="1" height="2"/>
<rect x="128" y="102" width="1" height="16"/>
<rect x="133" y="116" width="1" height="2"/>
<rect x="138" y="116" width="1" height="2"/>
<rect x="142" y="116" width="1" height="2"/>
<rect x="147" y="116" width="1" height="2"/>
<rect x="152" y="114" width="1" height="4"/>
<rect x="156" y="116" width="1" height="2"/>
<rect x="161" y="116" width="1" height="2"/>
<rect x="165" y="116" width="1" height="2"/>
<rect x="170" y="116" width="1" height="2"/>
<rect x="175" y="102" width="1" height="16"/>
<rect x="179" y="116" width="1" height="2"/>
<rect x="184" y="116" width="1" height="2"/>
<rect x="189" y="116" width="1" height="2"/>
<rect x="193" y="116" width="1" height="2"/>
<rect x="198" y="114" width="1" height="4"/>
<rect x="202" y="116" width="1" height="2"/>
<rect x="207" y="116" width="1" height="2"/>
<rect x="212" y="116" width="1" height="2"/>
<rect x="216" y="116" width="1" height="2"/>
<rect x="221" y="102" width="1" height="16"/>
<rect x="226" y="116" width="1" height="2"/>
<rect x="230" y="116" width="1" height="2"/>
<rect x="235" y="116" width="1" height="2"/>
<rect x="239" y="116" width="1" height="2"/>
<rect x="244" y="114" width="1" height="4"/>
<rect x="249" y="116" width="1" height="2"/>
<rect x="253" y="116" width="1" height="2"/>
<rect x="258" y="116" width="1" height="2"/>
<rect x="263" y="116" width="1" height="2"/>
<rect x="267" y="102" width="1" height="16"/>
<rect x="272" y="116" width="1" height="2"/>
<rect x="276" y="116" width="1" height="2"/>
<rect x="281" y="116" width="1" height="2"/>
<rect x="286" y="116" width="1" height="2"/>
<rect x="290" y="114" width="1" height="4"/>
<rect x="295" y="116" width="1" height="2"/>
<rect x="300" y="116" width="1" height="2"/>
<rect x="304" y="116" width="1" height="2"/>
<rect x="309" y="116" width="1" height="2"/>
<rect x="313" y="102" width="1" height="16"/>
<rect x="318" y="116" width="1" height="2"/>
<rect x="323" y="116" width="1" height="2"/>
<rect x="327" y="116" width="1" height="2"/>
<rect x="332" y="116" width="1" height="2"/>
<rect x="336" y="114" width="1" height="4"/>
<rect x="341" y="116" width="1" height="2"/>
<rect x="346" y="116" width="1" height="2"/>
<rect x="350" y="116" width="1" height="2"/>
<rect x="355" y="116" width="1" height="2"/>
<rect x="360" y="102" width="1" height="16"/>
<rect x="364" y="116" width="1" height="2"/>
<rect x="369" y="116" width="1" height="2"/>
<rect x="373" y="116" width="1" height="2"/>
<rect x="378" y="116" width="1" height="2"/>
<rect x="383" y="114" width="1" height="4"/>
<rect x="387" y="116" width="1" height="2"/>
<rect x="392" y="116" width="1" height="2"/>
<rect x="397" y="116" width="1" height="2"/>
<rect x="401" y="116" width="1" height="2"/>
<rect x="406" y="102" width="1" height="16"/>
<rect x="410" y="116" width="1" height="2"/>
<rect x="415" y="116" width="1" height="2"/>
<rect x="420" y="116" width="1" height="2"/>
<rect x="424" y="116" width="1" height="2"/>
<rect x="429" y="114" width="1" height="4"/>
<rect x="434" y="116" width="1" height="2"/>
<rect x="438" y="116" width="1" height="2"/>
<rect x="443" y="116" width="1" height="2"/>
<rect x="447" y="116" width="1" height="2"/>
<rect x="452" y="102" width="1" height="16"/>
<rect x="457" y="116" width="1" height="2"/>
<rect x="461" y="116" width="1" height="2"/>
<rect x="466" y="116" width="1" height="2"/>
<rect x="471" y="116" width="1" height="2"/>
<rect x="475" y="114" width="1" height="4"/>
<rect x="480" y="116" width="1" height="2"/>
<rect x="484" y="116" width="1" height="2"/>
<rect x="489" y="116" width="1" height="2"/>
<rect x="494" y="116" width="1" height="2"/>
<rect x="498" y="102" width="1" height="16"/>
<rect x="503" y="116" width="1" height="2"/>
<rect x="508" y="116" width="1" height="2"/>
<rect x="512" y="116" width="1" height="2"/>
<rect x="517" y="116" width="1" height="2"/>
<rect x="521" y="114" width="1" height="4"/>
<rect x="526" y="116" width="1" height="2"/>
<rect x="531" y="116" width="1" height="2"/>
<rect x="535" y="116" width="1" height="2"/>
<rect x="540" y="116" width="1" height="2"/>
<rect x="544" y="102" width="1" height="16"/>
<rect x="549" y="116" width="1" height="2"/>
<rect x="554" y="116" width="1" height="2"/>
<rect x="558" y="116" width="1" height="2"/>
<rect x="563" y="116" width="1" height="2"/>
<rect x="568" y="114" width="1" height="4"/>
<rect x="572" y="116" width="1" height="2"/>
<rect x="577" y="116" width="1" height="2"/>
<rect x="581" y="116" width="1" height="2"/>
<rect x="586" y="116" width="1" height="2"/>
<rect x="591" y="102" width="1" height="16"/>
<rect x="595" y="116" width="1" height="2"/>
<rect x="600" y="116" width="1" height="2"/>
<rect x="605" y="116" width="1" height="2"/>
<rect x="609" y="116" width="1" height="2"/>
<rect x="614" y="114" width="1" height="4"/>
<rect x="618" y="116" width="1" height="2"/>
<rect x="623" y="116" width="1" height="2"/>
<rect x="628" y="116" width="1" height="2"/>
<rect x="632" y="116" width="1" height="2"/>
<rect x="637" y="102" width="1" height="16"/>
<rect x="642" y="116" width="1" height="2"/>
<rect x="646" y="116" width="1" height="2"/>
<rect x="651" y="116" width="1" height="2"/>
<rect x="655" y="116" width="1" height="2"/>
<rect x="660" y="114" width="1" height="4"/>
<rect x="665" y="116" width="1" height="2"/>
<rect x="669" y="116" width="1" height="2"/>
<rect x="674" y="116" width="1" height="2"/>
<rect x="679" y="116" width="1" height="2"/>
<rect x="683" y="102" width="1" height="16"/>
<rect x="688" y="116" width="1" height="2"/>
<rect x="692" y="116" width="1" height="2"/>
<rect x="697" y="116" width="1" height="2"/>
<rect x="702" y="116" width="1" height="2"/>
<rect x="706" y="114" width="1" height="4"/>
<rect x="711" y="116" width="1" height="2"/>
<rect x="715" y="116" width="1" height="2"/>
<rect x="720" y="116" width="1" height="2"/>
<rect x="725" y="116" width="1" height="2"/>
<rect x="729" y="102" width="1" height="16"/>
<rect x="734" y="116" width="1" height="2"/>
<rect x="739" y="116" width="1" height="2"/>
<rect x="743" y="116" width="1" height="2"/>
<rect x="748" y="116" width="1" height="2"/>
<rect x="752" y="114" width="1" height="4"/>
<rect x="757" y="116" width="1" height="2"/>
<rect x="762" y="116" width="1" height="2"/>
<rect x="766" y="116" width="1" height="2"/>
<rect x="771" y="116" width="1" height="2"/>
<rect x="776" y="102" width="1" height="16"/>
<rect x="780" y="116" width="1" height="2"/>
<rect x="785" y="116" width="1" height="2"/>
<rect x="789" y="116" width="1" height="2"/>
<rect x="794" y="116" width="1" height="2"/>
<rect x="799" y="114" width="1" height="4"/>
<rect x="76" y="119" width="2" height="1"/>
<rect x="63" y="124" width="15" height="1"/>
<rect x="76" y="129" width="2" height="1"/>
<rect x="76" y="133" width="2" height="1"/>
<rect x="76" y="138" width="2" height="1"/>
<rect x="76" y="142" width="2" height="1"/>
<rect x="74" y="147" width="4" height="1"/>
<rect x="76" y="152" width="2" height="1"/>
<rect x="76" y="156" width="2" height="1"/>
<rect x="76" y="161" width="2" height="1"/>
<rect x="76" y="166" width="2" height="1"/>
<rect x="63" y="170" width="15" height="1"/>
<rect x="76" y="175" width="2" height="1"/>
<rect x="76" y="179" width="2" height="1"/>
<rect x="76" y="184" width="2" height="1"/>
<rect x="76" y="189" width="2" height="1"/>
<rect x="74" y="193" width="4" height="1"/>
<rect x="76" y="198" width="2" height="1"/>
<rect x="76" y="203" width="2" height="1"/>
<rect x="76" y="207" width="2" height="1"/>
<rect x="76" y="212" width="2" height="1"/>
<rect x="63" y="216" width="15" height="1"/>
<rect x="76" y="221" width="2" height="1"/>
<rect x="76" y="226" width="2" height="1"/>
<rect x="76" y="230" width="2" height="1"/>
<rect x="76" y="235" width="2" height="1"/>
<rect x="74" y="240" width="4" height="1"/>
<rect x="76" y="244" width="2" height="1"/>
<rect x="76" y="249" width="2" height="1"/>
<rect x="76" y="253" width="2" height="1"/>
<rect x="76" y="258" width="2" height="1"/>
<rect x="63" y="263" width="15" height="1"/>
<rect x="76" y="267" width="2" height="1"/>
<rect x="76" y="272" width="2" height="1"/>
<rect x="76" y="277" width="2" height="1"/>
<rect x="76" y="281" width="2" height="1"/>
<rect x="74" y="286" width="4" height="1"/>
<rect x="76" y="290" width="2" height="1"/>
<rect x="76" y="295" width="2" height="1"/>
<rect x="76" y="300" width="2" height="1"/>
<rect x="76" y="304" width="2" height="1"/>
<rect x="63" y="309" width="15" height="1"/>
<rect x="76" y="314" width="2" height="1"/>
<rect x="76" y="318" width="2" height="1"/>
<rect x="76" y="323" width="2" height="1"/>
<rect x="76" y="327" width="2" height="1"/>
<rect x="74" y="332" width="4" height="1"/>
<rect x="76" y="337" width="2" height="1"/>
<rect x="76" y="341" width="2" height="1"/>
<rect x="76" y="346" width="2" height="1"/>
<rect x="76" y="350" width="2" height="1"/>
<rect x="63" y="355" width="15" height="1"/>
<rect x="76" y="360" width="2" height="1"/>
<rect x="76" y="364" width="2" height="1"/>
<rect x="76" y="369" width="2" height="1"/>
<rect x="76" y="374" width="2" height="1"/>
<rect x="74" y="378" width="4" height="1"/>
<rect x="76" y="383" width="2" height="1"/>
<rect x="76" y="387" width="2" height="1"/>
<rect x="76" y="392" width="2" height="1"/>
<rect x="76" y="397" width="2" height="1"/>
<rect x="63" y="401" width="15" height="1"/>
<rect x="76" y="406" width="2" height="1"/>
<rect x="76" y="411" width="2" height="1"/>
<rect x="76" y="415" width="2" height="1"/>
<rect x="76" y="420" width="2" height="1"/>
<rect x="74" y="424" width="4" height="1"/>
<rect x="76" y="429" width="2" height="1"/>
<rect x="76" y="434" width="2" height="1"/>
<rect x="76" y="438" width="2" height="1"/>
<rect x="76" y="443" width="2" height="1"/>
<rect x="63" y="448" width="15" height="1"/>
<rect x="76" y="452" width="2" height="1"/>
<rect x="76" y="457" width="2" height="1"/>
<rect x="76" y="461" width="2" height="1"/>
<rect x="76" y="466" width="2" height="1"/>
<rect x="74" y="471" width="4" height="1"/>
<rect x="76" y="475" width="2" height="1"/>
<rect x="76" y="480" width="2" height="1"/>
<rect x="76" y="485" width="2" height="1"/>
<rect x="76" y="489" width="2" height="1"/>
<rect x="63" y="494" width="15" height="1"/>
<rect x="76" y="498" width="2" height="1"/>
<rect x="76" y="503" width="2" height="1"/>
<rect x="76" y="508" width="2" height="1"/>
<rect x="76" y="512" width="2" height="1"/>
<rect x="74" y="517" width="4" height="1"/>
<rect x="76" y="521" width="2" height="1"/>
<rect x="76" y="526" width="2" height="1"/>
<rect x="76" y="531" width="2" height="1"/>
<rect x="76" y="535" width="2" height="1"/>
<rect x="63" y="540" width="15" height="1"/>
<rect x="76" y="545" width="2" height="1"/>
<rect x="76" y="549" width="2" height="1"/>
<rect x="76" y="554" width="2" height="1"/>
<rect x="76" y="558" width="2" height="1"/>
<rect x="74" y="563" width="4" height="1"/>
<rect x="76" y="568" width="2" height="1"/>
<rect x="76" y="572" width="2" height="1"/>
<rect x="76" y="577" width="2" height="1"/>
<rect x="76" y="582" width="2" height="1"/>
<rect x="63" y="586" width="15" height="1"/>
<rect x="76" y="591" width="2" height="1"/>
<rect x="76" y="595" width="2" height="1"/>
<rect x="76" y="600" width="2" height="1"/>
</g></svg>
<div class="a" style="left:0;top:0;width:800px;height:600px;font:9px 'Liberation Sans';color:#000;-webkit-text-stroke:0.25px #000">
<div class="rl" style="left:84px">10</div>
<div class="rl" style="left:130px">0</div>
<div class="rl" style="left:177px">10</div>
<div class="rl" style="left:223px">20</div>
<div class="rl" style="left:269px">30</div>
<div class="rl" style="left:315px">40</div>
<div class="rl" style="left:362px">50</div>
<div class="rl" style="left:408px">60</div>
<div class="rl" style="left:454px">70</div>
<div class="rl" style="left:500px">80</div>
<div class="rl" style="left:546px">90</div>
<div class="rl" style="left:593px">100</div>
<div class="rl" style="left:639px">110</div>
<div class="rl" style="left:685px">120</div>
<div class="rl" style="left:731px">130</div>
<div class="rl" style="left:778px">140</div>
<div class="rv" style="top:125px">0</div>
<div class="rv" style="top:171px">1</div>
<div class="rv" style="top:179px">0</div>
<div class="rv" style="top:217px">2</div>
<div class="rv" style="top:225px">0</div>
<div class="rv" style="top:264px">3</div>
<div class="rv" style="top:272px">0</div>
<div class="rv" style="top:310px">4</div>
<div class="rv" style="top:318px">0</div>
<div class="rv" style="top:356px">5</div>
<div class="rv" style="top:364px">0</div>
<div class="rv" style="top:402px">6</div>
<div class="rv" style="top:410px">0</div>
<div class="rv" style="top:449px">7</div>
<div class="rv" style="top:457px">0</div>
<div class="rv" style="top:495px">8</div>
<div class="rv" style="top:503px">0</div>
<div class="rv" style="top:541px">9</div>
<div class="rv" style="top:549px">0</div>
<div class="rv" style="top:587px">1</div>
<div class="rv" style="top:595px">0</div>
<div class="rv" style="top:603px">0</div>
</div>
<div class="a" style="left:128px;top:124px;width:672px;height:1px;background:#c070d0"></div>
<div class="a" style="left:128px;top:124px;width:1px;height:476px;background:#7f3fb0"></div>
<svg class="a" style="left:0;top:0" width="800" height="600">
  <rect x="148.5" y="147.5" width="219" height="219.5" rx="30" ry="30" fill="#ffec00"/>
  <rect x="149.3" y="148.3" width="217.4" height="217.9" rx="29.2" ry="29.2" fill="none" stroke="#1a1a1a" stroke-width="1.6"/>
  <rect x="148.5" y="147.5" width="219" height="219.5" rx="30" ry="30" fill="none" stroke="#5b7fcf" stroke-width="0.7"/>
  <g shape-rendering="crispEdges" fill="#5b7fcf">
    <rect x="148" y="147" width="219" height="1"/>
    <rect x="148" y="367" width="220" height="1"/>
    <rect x="148" y="147" width="1" height="220"/>
    <rect x="367" y="147" width="1" height="220"/>
  </g>
  <g fill="#fff" stroke="#5b7fcf" stroke-width="1" shape-rendering="crispEdges">
    <rect x="145.5" y="144.5" width="5" height="5"/>
    <rect x="255.5" y="144.5" width="5" height="5"/>
    <rect x="364.5" y="144.5" width="5" height="5"/>
    <rect x="145.5" y="254.5" width="5" height="5"/>
    <rect x="364.5" y="254.5" width="5" height="5"/>
    <rect x="145.5" y="364.5" width="5" height="5"/>
    <rect x="255.5" y="364.5" width="5" height="5"/>
    <rect x="364.5" y="364.5" width="5" height="5"/>
  </g>
  <g fill="#f2d824" stroke="#6a82ae" stroke-width="1">
    <path d="M178.8 142.3L183.1 147L178.8 151.7L174.5 147Z"/>
    <path d="M338 142.3L342.3 147L338 151.7L333.7 147Z"/>
    <path d="M178.5 362L182.8 366.7L178.5 371.4L174.2 366.7Z"/>
    <path d="M337.7 362L342 366.7L337.7 371.4L333.4 366.7Z"/>
  </g>
  <g fill="none" stroke="#c82a30" stroke-width="1.3">
    <ellipse cx="179" cy="147.7" rx="11.4" ry="12.4"/>
    <ellipse cx="341" cy="149.7" rx="14.3" ry="11.2"/>
    <ellipse cx="181" cy="367.3" rx="13.4" ry="13.7"/>
    <ellipse cx="340.5" cy="368.8" rx="14.9" ry="12.2"/>
  </g>
</svg>
</body></html>
